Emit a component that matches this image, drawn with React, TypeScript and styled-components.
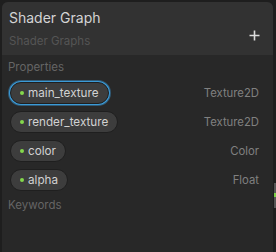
import React from 'react';
import styled, { createGlobalStyle } from 'styled-components';

const GlobalStyle = createGlobalStyle`
  body {
    margin: 0;
    background: #1e1e1e;
    font-family: Inter, "Noto Sans", sans-serif;
  }
`;

const Stage = styled.div`
  position: relative;
  width: 276px;
  height: 252px;
  overflow: hidden;
  padding: 2px 0 0 2px;
  box-sizing: border-box;
`;

const Panel = styled.div`
  width: 271px;
  height: 260px;
  border-radius: 6px 6px 0 0;
  background: #282828;
  overflow: hidden;
`;

const Header = styled.div`
  height: 53px;
  box-sizing: border-box;
  background: #323232;
  padding: 7px 7px 0 7px;
  display: flex;
  justify-content: space-between;
  align-items: flex-start;
`;

const Titles = styled.div`
  display: flex;
  flex-direction: column;
`;

const Title = styled.div`
  font-size: 14px;
  line-height: 18px;
  color: #d4d4d4;
`;

const Subtitle = styled.div`
  margin-top: 7px;
  font-size: 11.5px;
  line-height: 14px;
  color: #555555;
`;

const AddButton = styled.div`
  margin-top: 21px;
  margin-right: 6px;
  width: 11px;
  height: 11px;
  display: flex;
`;

const SectionLabel = styled.div`
  padding: 4px 6px 0 6px;
  height: 17px;
  font-size: 11.5px;
  line-height: 17px;
  color: #656565;
`;

const List = styled.div`
  display: flex;
  flex-direction: column;
  padding-top: 6px;
  gap: 7px;
`;

const Row = styled.div`
  display: flex;
  justify-content: space-between;
  align-items: center;
  height: 22px;
  padding: 0 14px 0 8px;
`;

const Pill = styled.div<{ $selected?: boolean }>`
  display: flex;
  align-items: center;
  gap: 4px;
  height: 22px;
  box-sizing: border-box;
  padding: 0 9px 0 9px;
  border-radius: 11px;
  background: #3d3d3d;
  border: 1px solid #1f1f1f;
  font-size: 11.7px;
  color: #d2d2d2;
  box-shadow: ${p => (p.$selected ? '0 0 0 1px #3b9ad6, 0 0 0 2px rgba(59, 154, 214, 0.45)' : 'none')};
`;

const Dot = styled.span`
  width: 4px;
  height: 4px;
  border-radius: 50%;
  background: #84d84c;
`;

const TypeLabel = styled.div`
  font-size: 11.3px;
  color: #808080;
`;

const Keywords = styled(SectionLabel)`
  padding-top: 6px;
`;

const EdgeHandle = styled.div`
  position: absolute;
  right: 0;
  top: 183px;
  width: 2px;
  height: 25px;
  background: #555;
  &::after {
    content: '';
    position: absolute;
    left: 0;
    top: 10px;
    width: 2px;
    height: 4px;
    background: #7ccf45;
  }
`;

const properties = [
  { name: 'main_texture', type: 'Texture2D', selected: true },
  { name: 'render_texture', type: 'Texture2D' },
  { name: 'color', type: 'Color' },
  { name: 'alpha', type: 'Float' },
];

export default function App() {
  return (
    <Stage>
      <GlobalStyle />
      <Panel>
        <Header>
          <Titles>
            <Title>Shader Graph</Title>
            <Subtitle>Shader Graphs</Subtitle>
          </Titles>
          <AddButton>
            <svg width="11" height="11" viewBox="0 0 11 11">
              <path d="M5.5 0.5v10M0.5 5.5h10" stroke="#dcdcdc" strokeWidth="1.6" />
            </svg>
          </AddButton>
        </Header>
        <SectionLabel>Properties</SectionLabel>
        <List>
          {properties.map(p => (
            <Row key={p.name}>
              <Pill $selected={p.selected}>
                <Dot />
                {p.name}
              </Pill>
              <TypeLabel>{p.type}</TypeLabel>
            </Row>
          ))}
        </List>
        <Keywords>Keywords</Keywords>
      </Panel>
      <EdgeHandle />
    </Stage>
  );
}
